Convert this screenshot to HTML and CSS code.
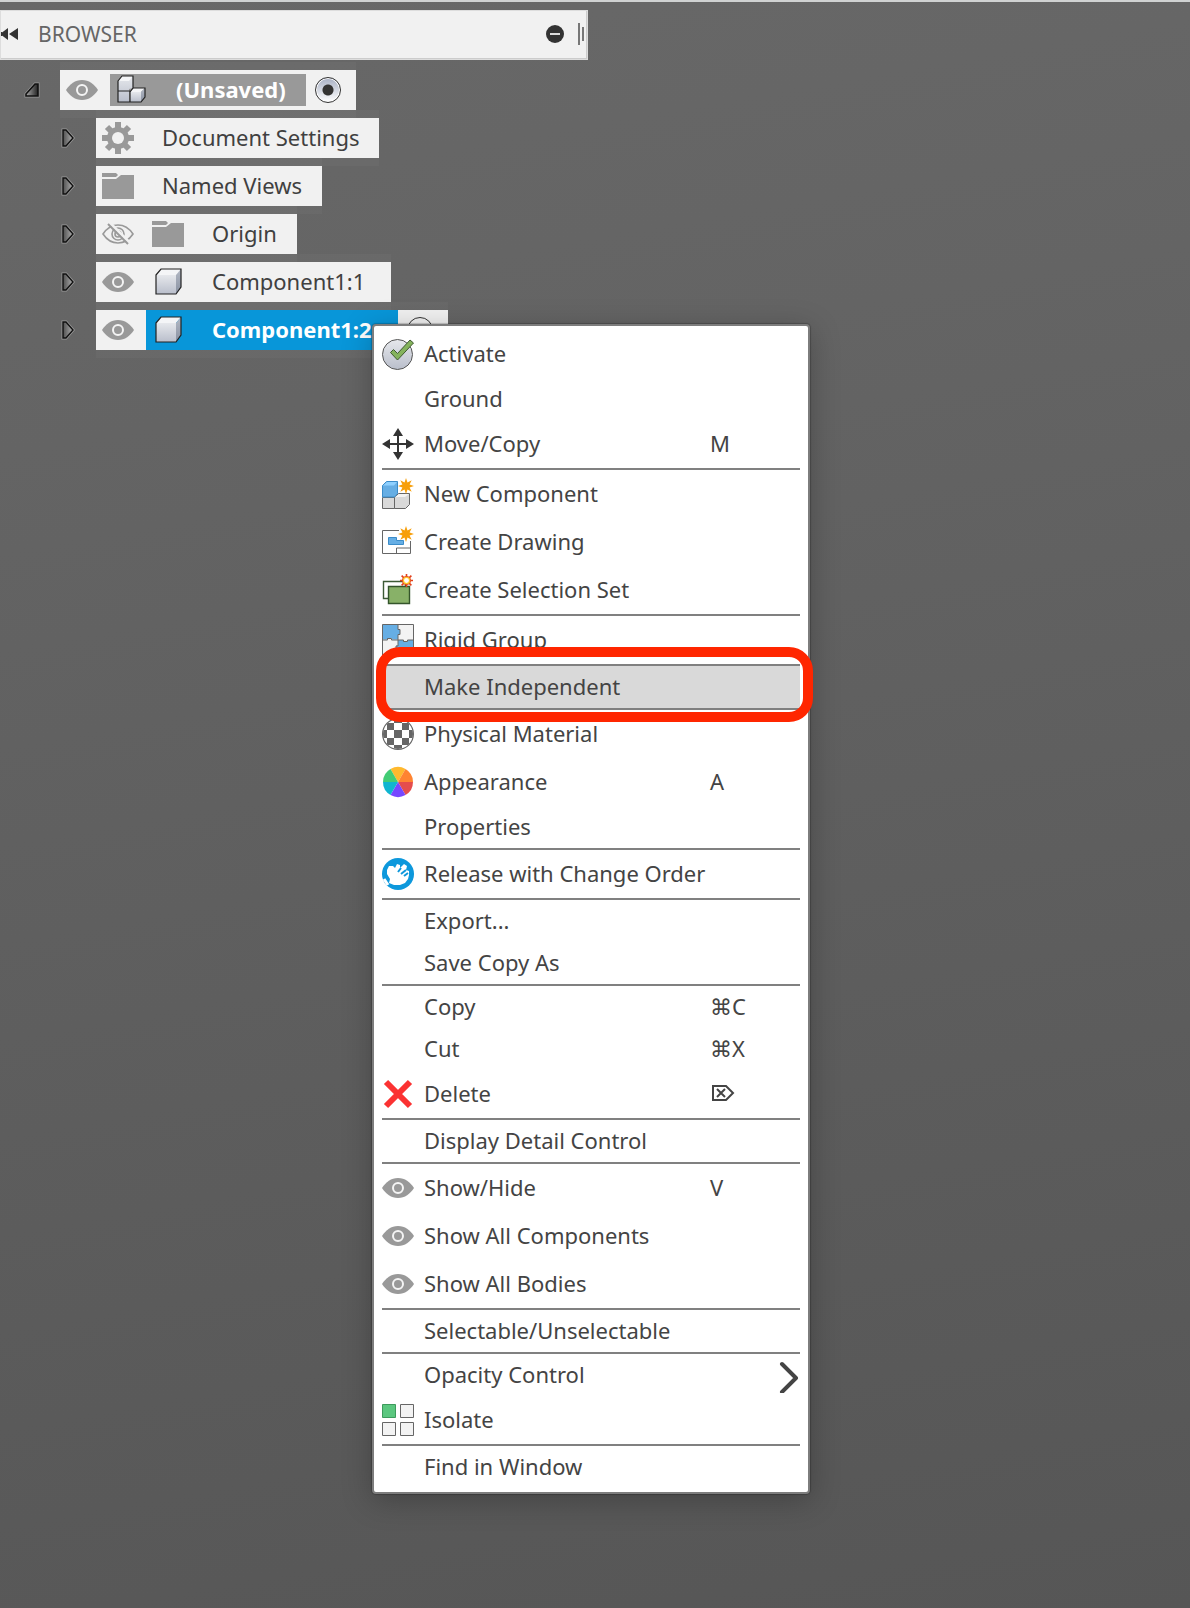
FILE: index.html
```html
<!DOCTYPE html>
<html lang="en">

<head>
    <meta charset="UTF-8">
    <meta name="viewport" content="width=device-width, initial-scale=1.0">
    <title>Browser</title>
    <link rel="stylesheet" href="styles.css">
</head>

<body>

    <!-- shared icons -->
    <svg class="sprite" aria-hidden="true">
        <defs>
            <linearGradient id="steel" x1="0" y1="0" x2="0" y2="1">
                <stop offset="0" stop-color="#e6e8ec" />
                <stop offset="1" stop-color="#b9becb" />
            </linearGradient>
            <linearGradient id="side" x1="0" y1="0" x2="0" y2="1">
                <stop offset="0" stop-color="#b4bac6" />
                <stop offset="1" stop-color="#8890a0" />
            </linearGradient>
            <linearGradient id="arrow" x1="0" y1="0" x2="1" y2="0">
                <stop offset="0" stop-color="#505050" />
                <stop offset="1" stop-color="#b0b0b0" />
            </linearGradient>
            <linearGradient id="corner" x1="0" y1="0" x2="1" y2="0">
                <stop offset="0" stop-color="#aaa" />
                <stop offset="1" stop-color="#222" />
            </linearGradient>
            <clipPath id="ball"><circle cx="16" cy="16" r="15" /></clipPath>
        </defs>
        <symbol id="eye" viewBox="0 0 32 32">
            <path d="M0 16C4 10 9 6 16 6s12 4 16 10c-4 6-9 10-16 10S4 22 0 16z" fill="#999" />
            <circle cx="16" cy="16" r="5" fill="none" stroke="#f4f4f4" stroke-width="2" />
        </symbol>
        <symbol id="eye-off" viewBox="0 0 32 32">
            <g fill="none" stroke="#999" stroke-width="1.6">
                <path d="M1 16c4-6 9-9 15-9s11 3 15 9c-4 6-9 9-15 9S5 22 1 16z" />
                <circle cx="16" cy="16" r="6" />
                <circle cx="16" cy="16" r="3" />
            </g>
            <path d="M8 5l20 20" stroke="#f1f1f1" stroke-width="3" />
            <path d="M6 6l20 20" stroke="#999" stroke-width="2" />
        </symbol>
        <symbol id="folder" viewBox="0 0 32 32">
            <path d="M0 3h14l2 2-2 2H0z" fill="#999" />
            <path d="M0 9h14l5-4h13v24H0z" fill="#999" />
        </symbol>
        <symbol id="cube" viewBox="0 0 32 32">
            <path d="M4 9l5-6h20l-5 6z" fill="#f4f5f7" />
            <path d="M4 9h20v19H4z" fill="url(#steel)" />
            <path d="M24 9l5-6v18l-5 7z" fill="url(#side)" />
            <path d="M4 9l5-6h20v18l-5 7H4z" fill="none" stroke="#222" stroke-width="1.2" />
        </symbol>
        <symbol id="closed" viewBox="0 0 16 22">
            <path d="M3 3v16h3l7-8-7-8z" fill="none" stroke="#999" stroke-width="3" />
            <path d="M3 3v16h3l7-8-7-8z" fill="url(#arrow)" stroke="#111" stroke-width="1.4" />
        </symbol>
        <symbol id="star" viewBox="0 0 16 16">
            <path d="M8 0l1.5 4.4L13.7 2.3 11.6 6.5 16 8l-4.4 1.5 2.1 4.2-4.2-2.1L8 16l-1.5-4.4-4.2 2.1 2.1-4.2L0 8l4.4-1.5-2.1-4.2 4.2 2.1z" fill="#f79f0a" />
        </symbol>
    </svg>

    <header class="panel-header">
        <button class="icon-btn" aria-label="Collapse panel">
            <svg width="20" height="12"><path d="M8 0v12L0 6zM18 0v12L9 6zM0 4h2v4H0z" fill="#333" /></svg>
        </button>
        <h1>BROWSER</h1>
        <button class="icon-btn" aria-label="Minimize">
            <svg width="18" height="18"><circle cx="9" cy="9" r="9" fill="#333" /><path d="M4 9h10" stroke="#ddd" stroke-width="2" /></svg>
        </button>
        <svg class="grip" width="6" height="22"><path d="M1 0v22M5 4v14" stroke="#777" stroke-width="2" /></svg>
    </header>

    <main class="tree">
        <div class="row root">
            <button class="icon-btn toggle" aria-label="Collapse document">
                <svg width="16" height="16"><path d="M14 2v12H2v-2L11 2z" fill="none" stroke="#999" stroke-width="3" /><path d="M14 2v12H2v-2L11 2z" fill="url(#corner)" stroke="#111" stroke-width="1.6" /></svg>
            </button>
            <div class="chip">
                <button class="icon-btn cell" aria-label="Show or hide document"><svg class="icon"><use href="#eye" /></svg></button>
                <span class="doc">
                    <svg class="icon" viewBox="0 0 32 32">
                        <path d="M4 7l4-5h11v12l-4 1v13H4z" fill="url(#steel)" />
                        <path d="M4 7l4-5h11l-4 5z" fill="#f4f5f7" />
                        <path d="M16 18l4-4h11l-4 4z" fill="#f4f5f7" />
                        <path d="M16 18h11v10H16z" fill="url(#steel)" />
                        <path d="M27 18l4-4v9l-4 5z" fill="url(#side)" />
                        <path d="M4 7l4-5h11v12h12v9l-4 5H4zM16 28V18l3-4M4 17h12" fill="none" stroke="#222" stroke-width="1.2" />
                    </svg>
                    <span class="text">(Unsaved)</span>
                </span>
                <span class="cell"><input type="radio" class="active-dot" name="active" aria-label="Activate document" checked></span>
            </div>
        </div>
        <div class="row">
            <button class="icon-btn toggle" aria-label="Expand Document Settings"><svg width="16" height="22"><use href="#closed" /></svg></button>
            <div class="chip">
                <span class="cell">
                    <svg class="icon" viewBox="0 0 32 32">
                        <g stroke="#999" stroke-width="6"><path d="M16 0v32M0 16h32M5 5l22 22M27 5L5 27" /></g>
                        <circle cx="16" cy="16" r="11" fill="#999" />
                        <circle cx="16" cy="16" r="6" fill="#f1f1f1" />
                    </svg>
                </span>
                <span class="name">Document Settings</span>
            </div>
        </div>
        <div class="row">
            <button class="icon-btn toggle" aria-label="Expand Named Views"><svg width="16" height="22"><use href="#closed" /></svg></button>
            <div class="chip">
                <span class="cell"><svg class="icon"><use href="#folder" /></svg></span>
                <span class="name">Named Views</span>
            </div>
        </div>
        <div class="row">
            <button class="icon-btn toggle" aria-label="Expand Origin"><svg width="16" height="22"><use href="#closed" /></svg></button>
            <div class="chip">
                <button class="icon-btn cell" aria-label="Show Origin"><svg class="icon"><use href="#eye-off" /></svg></button>
                <span class="cell"><svg class="icon"><use href="#folder" /></svg></span>
                <span class="name">Origin</span>
            </div>
        </div>
        <div class="row">
            <button class="icon-btn toggle" aria-label="Expand Component1:1"><svg width="16" height="22"><use href="#closed" /></svg></button>
            <div class="chip">
                <button class="icon-btn cell" aria-label="Hide Component1:1"><svg class="icon"><use href="#eye" /></svg></button>
                <span class="cell"><svg class="icon"><use href="#cube" /></svg></span>
                <span class="name part">Component1:1</span>
            </div>
        </div>
        <div class="row">
            <button class="icon-btn toggle" aria-label="Expand Component1:2"><svg width="16" height="22"><use href="#closed" /></svg></button>
            <div class="chip">
                <button class="icon-btn cell" aria-label="Hide Component1:2"><svg class="icon"><use href="#eye" /></svg></button>
                <span class="selected">
                    <span class="cell"><svg class="icon"><use href="#cube" /></svg></span>
                    <span class="name part">Component1:2</span>
                </span>
                <span class="cell"><input type="radio" class="active-dot" name="active" aria-label="Activate Component1:2"></span>
            </div>
        </div>
    </main>

    <!-- context menu -->
    <div class="menu" role="menu">
        <div class="group">
            <button class="item tall" role="menuitem">
                <svg class="icon" viewBox="0 0 32 32">
                    <circle cx="15.5" cy="16.5" r="15" fill="url(#steel)" stroke="#555" />
                    <path d="M8.5 14.5l3-3 4 4L28 2l3.5 3L15.500 22z" fill="#84b35c" stroke="#3f5a30" />
                </svg>
                <span class="label">Activate</span>
            </button>
            <button class="item" role="menuitem"><span class="icon"></span><span class="label">Ground</span></button>
            <button class="item tall" role="menuitem">
                <svg class="icon" viewBox="0 0 32 32">
                    <path d="M16 4v24M4 16h24" stroke="#333" stroke-width="2" />
                    <path d="M16 0l5 8H11zM16 32l5-8H11zM0 16l8-5v10zM32 16l-8-5v10z" fill="#333" />
                </svg>
                <span class="label">Move/Copy</span><kbd>M</kbd>
            </button>
        </div>
        <div class="group">
            <button class="item tall" role="menuitem">
                <svg class="icon" viewBox="0 0 32 32">
                    <path d="M.5 19.5h12v11H.5z" fill="#d9d9d9" stroke="#666" />
                    <path d="M12.5 19.5l4-4h11v11l-4 4h-11z" fill="#d9d9d9" stroke="#666" />
                    <path d="M13 19l4-3h10l-4 3z" fill="#f3f3f3" />
                    <path d="M.5 7.5l4-4h11v12l-3 3.5H.5z" fill="#66aee4" stroke="#3b8cc9" />
                    <path d="M1 7.5l4-3.500h10l-3 3.500z" fill="#8ed0ff" />
                    <svg x="16" y="0" width="16" height="16"><use href="#star" /></svg>
                </svg>
                <span class="label">New Component</span>
            </button>
            <button class="item tall" role="menuitem">
                <svg class="icon" viewBox="0 0 32 32">
                    <path d="M17 4.5H.5v23h28V15M14.5 27v-5H28" fill="none" stroke="#666" />
                    <path d="M6.5 11.5h8v3h7v4h-15z" fill="#66aee4" stroke="#3b8cc9" />
                    <svg x="16" y="0" width="16" height="16"><use href="#star" /></svg>
                </svg>
                <span class="label">Create Drawing</span>
            </button>
            <button class="item tall" role="menuitem">
                <svg class="icon" viewBox="0 0 32 32">
                    <path d="M1.5 7.5h22v17h-22z" fill="#fff" stroke="#3c5a35" stroke-width="1.4" />
                    <path d="M6.5 12.5h21v17h-21z" fill="#88b168" stroke="#34552b" stroke-width="1.4" />
                    <svg x="18" y="0" width="13" height="13" viewBox="0 0 16 16">
                        <path d="M8 0v16M0 8h16M2 2l12 12M14 2L2 14" stroke="#e2401c" stroke-width="2" />
                        <circle cx="8" cy="8" r="5" fill="#ffc928" stroke="#e2401c" />
                        <circle cx="8" cy="8" r="3" fill="#fff" />
                    </svg>
                </svg>
                <span class="label">Create Selection Set</span>
            </button>
        </div>
        <div class="group">
            <button class="item tall" role="menuitem">
                <svg class="icon" viewBox="0 0 32 32">
                    <path d="M.5.5h31v31H.5z" fill="#f3f3f3" />
                    <path d="M.5.5h15.5v5h2v5h-2v5h-6v-1.500h-4v1.500H.5z" fill="#66aee4" />
                    <path d="M16 16h6v1.500h4V16h5.500v15.500H16v-6h-2v-4h2z" fill="#66aee4" />
                    <path d="M.5.5h31v31H.5zM16 .5v5h2v5h-2V22h-2v4h2v5.500M.5 16h5v-1.500h4V16h12v1.500h4V16h6" fill="none" stroke="#666" />
                </svg>
                <span class="label">Rigid Group</span>
            </button>
        </div>
        <div class="group">
            <button class="item hover" role="menuitem"><span class="icon"></span><span class="label">Make Independent</span></button>
            <div class="callout"></div>
        </div>
        <div class="group">
            <button class="item tall" role="menuitem">
                <svg class="icon" viewBox="0 0 32 32">
                    <g clip-path="url(#ball)">
                        <path d="M0 0h32v32H0z" fill="#fff" />
                        <path d="M12 0h8v5h-8zM5 5h7v7H5zM20 5h7v7h-7zM12 12h8v8h-8zM0 12h5v8H0zM27 12h5v8h-5zM5 20h7v7H5zM20 20h7v7h-7zM12 27h8v5h-8z" fill="#666" />
                    </g>
                    <circle cx="16" cy="16" r="15.4" fill="none" stroke="#666" stroke-width="1.2" />
                </svg>
                <span class="label">Physical Material</span>
            </button>
            <button class="item tall" role="menuitem">
                <svg class="icon" viewBox="0 0 32 32">
                    <path d="M16 16L8.5 3a15 15 0 0 1 15 0z" fill="#ffb92e" />
                    <path d="M16 16l7.5-13A15 15 0 0 1 31 16z" fill="#ff8431" />
                    <path d="M16 16h15a15 15 0 0 1-7.500 13z" fill="#e54d4d" />
                    <path d="M16 16l7.5 13a15 15 0 0 1-15 0z" fill="#7647ff" />
                    <path d="M16 16L8.500 29A15 15 0 0 1 1 16z" fill="#0fb5d0" />
                    <path d="M16 16H1A15 15 0 0 1 8.500 3z" fill="#42cc75" />
                </svg>
                <span class="label">Appearance</span><kbd>A</kbd>
            </button>
            <button class="item" role="menuitem"><span class="icon"></span><span class="label">Properties</span></button>
        </div>
        <div class="group">
            <button class="item tall" role="menuitem">
                <svg class="icon" viewBox="0 0 32 32">
                    <circle cx="16" cy="16" r="16" fill="#0d98dc" />
                    <path d="M5 12l2-4h4l2 2 2-4 3 1v3l4-4 3 2-1 4 3 1v4l-1 4-3 4-5 2h-6l-5-2 1-4-3-5z" fill="#fff" />
                    <path d="M16 14l3-4M19 16l5-4M22 18l4-3" stroke="#0d98dc" stroke-width="2" />
                    <path d="M2 21l4 6" stroke="#fff" stroke-width="3" />
                </svg>
                <span class="label">Release with Change Order</span>
            </button>
        </div>
        <div class="group">
            <button class="item" role="menuitem"><span class="icon"></span><span class="label">Export...</span></button>
            <button class="item" role="menuitem"><span class="icon"></span><span class="label">Save Copy As</span></button>
        </div>
        <div class="group">
            <button class="item" role="menuitem"><span class="icon"></span><span class="label">Copy</span><kbd>⌘C</kbd></button>
            <button class="item" role="menuitem"><span class="icon"></span><span class="label">Cut</span><kbd>⌘X</kbd></button>
            <button class="item tall" role="menuitem">
                <svg class="icon" viewBox="0 0 32 32"><path d="M4 4l24 24M28 4L4 28" stroke="#fb3232" stroke-width="6" /></svg>
                <span class="label">Delete</span>
                <kbd aria-label="Forward delete"><svg width="26" height="18"><path d="M3 2h13l7 7-7 7H3zM7 5l8 8M15 5l-8 8" fill="none" stroke="#444" stroke-width="2" /></svg></kbd>
            </button>
        </div>
        <div class="group">
            <button class="item" role="menuitem"><span class="icon"></span><span class="label">Display Detail Control</span></button>
        </div>
        <div class="group">
            <button class="item tall" role="menuitem"><svg class="icon"><use href="#eye" /></svg><span class="label">Show/Hide</span><kbd>V</kbd></button>
            <button class="item tall" role="menuitem"><svg class="icon"><use href="#eye" /></svg><span class="label">Show All Components</span></button>
            <button class="item tall" role="menuitem"><svg class="icon"><use href="#eye" /></svg><span class="label">Show All Bodies</span></button>
        </div>
        <div class="group">
            <button class="item" role="menuitem"><span class="icon"></span><span class="label">Selectable/Unselectable</span></button>
        </div>
        <div class="group">
            <button class="item" role="menuitem" aria-haspopup="true">
                <span class="icon"></span><span class="label">Opacity Control</span>
                <svg width="24" height="36"><path d="M6 7l14 14L6 35" fill="none" stroke="#444" stroke-width="4" stroke-linecap="round" stroke-linejoin="round" /></svg>
            </button>
            <button class="item tall" role="menuitem">
                <svg class="icon" viewBox="0 0 32 32">
                    <path d="M.5.5h13v13H.5z" fill="#5bc77f" stroke="#3d9a5c" />
                    <path d="M18.5.5h13v13h-13zM.5 18.5h13v13H.5zM18.5 18.5h13v13h-13z" fill="#f3f3f3" stroke="#666" />
                </svg>
                <span class="label">Isolate</span>
            </button>
        </div>
        <div class="group">
            <button class="item" role="menuitem"><span class="icon"></span><span class="label">Find in Window</span></button>
        </div>
    </div>

</body>

</html>
```
FILE: styles.css
```css
* {
    box-sizing: border-box;
}

body {
    margin: 0;
    min-height: 100vh;
    border-top: 2px solid #d0d2d2;
    padding-top: 8px;
    font-family: "Noto Sans", "DejaVu Sans", sans-serif;
    font-size: 22px;
    line-height: 30px;
    color: #404040;
    background: linear-gradient(170deg, #686868, #646464 25%, #565656);
}

.sprite {
    position: absolute;
    width: 0;
    height: 0;
}

button {
    font: inherit;
    color: inherit;
    background: none;
    border: 0;
    padding: 0;
    cursor: pointer;
}

svg {
    display: block;
}

.icon {
    width: 32px;
    height: 32px;
    flex: none;
    overflow: visible;
}

/* panel header */
.panel-header {
    display: flex;
    align-items: center;
    width: 588px;
    max-width: 100%;
    height: 50px;
    background: #f1f1f1;
    border-right: 2px solid #ccc;
    border-bottom: 2px solid #ccc;
    outline: 1px solid #ddd;
    outline-offset: -1px;
}

.panel-header h1 {
    flex: 1;
    margin: 0;
    padding-left: 18px;
    font-size: 21px;
    font-weight: normal;
    color: #666;
}

.grip {
    margin: 0 2px 0 14px;
}

/* tree */
.tree {
    display: flex;
    flex-direction: column;
    gap: 8px;
    padding-top: 10px;
}

.row {
    display: flex;
    align-items: center;
    padding-left: 60px;
}

.row.root {
    padding-left: 24px;
}

.toggle {
    width: 36px;
    flex: none;
}

.chip {
    display: flex;
    align-items: center;
    height: 40px;
    background: #f1f1f1;
    box-shadow: 0 8px 0 rgba(255, 255, 255, 0.03), 0 -8px 0 rgba(255, 255, 255, 0.03);
}

.cell {
    display: flex;
    align-items: center;
    width: 50px;
    height: 40px;
    padding-left: 6px;
}

.name {
    padding: 0 20px 2px 16px;
}

.name.part {
    padding-right: 26px;
}

.doc {
    display: flex;
    align-items: center;
    gap: 30px;
    height: 32px;
    padding: 0 20px 0 4px;
    font-weight: bold;
    color: #fff;
    background: #999;
}

.text {
    padding-bottom: 2px;
}

.selected {
    display: flex;
    align-items: center;
    font-weight: bold;
    color: #fff;
    background: #0896d9;
}

.active-dot {
    appearance: none;
    width: 26px;
    height: 26px;
    margin: 0 3px;
    border: 1px solid #333;
    border-radius: 50%;
}

.active-dot:checked {
    background: radial-gradient(circle, #333 5px, transparent 6px), linear-gradient(#a8b0c4, #fff);
    box-shadow: inset 0 0 0 1px #fff;
}

/* context menu */
.menu {
    position: absolute;
    top: 324px;
    left: 372px;
    width: 438px;
    padding: 4px 8px;
    color: #444;
    background: #fff;
    border: 2px solid #7d7d7d;
    border-radius: 4px;
    box-shadow: 0 0 1px 1px rgba(0, 0, 0, 0.2), 0 6px 30px rgba(0, 0, 0, 0.25);
}

.group {
    position: relative;
}

.group + .group {
    border-top: 2px solid #808080;
}

.item {
    display: flex;
    align-items: center;
    gap: 10px;
    width: 100%;
    height: 42px;
    text-align: left;
}

.item.tall {
    height: 48px;
}

.item.hover {
    background: #d9d9d9;
}

.label {
    flex: 1;
    padding-bottom: 2px;
    white-space: nowrap;
}

.item kbd {
    width: 90px;
    padding-bottom: 2px;
    font-family: inherit;
}

/* red frame round the highlighted item */
.callout {
    position: absolute;
    z-index: 1;
    inset: -19px -13px -14px -6px;
    border: 10px solid #ff2600;
    border-radius: 24px;
    pointer-events: none;
}
```
